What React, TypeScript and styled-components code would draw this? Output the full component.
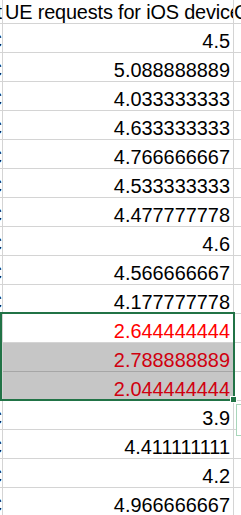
import styled, { createGlobalStyle } from "styled-components";

const GlobalStyle = createGlobalStyle`
  html, body {
    margin: 0;
    padding: 0;
    background: #fff;
    overflow: hidden;
  }
`;

const Sheet = styled.div`
  position: relative;
  width: 241px;
  height: 515px;
  overflow: hidden;
  font-family: "Liberation Sans", Arial, sans-serif;
  font-size: 19.9px;
  color: #000;
  background: #fff;
`;

const Row = styled.div<{ $header?: boolean }>`
  display: flex;
  height: ${(p) => (p.$header ? 24 : 29)}px;
`;

const Cell = styled.div<{ $fill?: boolean }>`
  box-sizing: border-box;
  display: flex;
  align-items: flex-end;
  height: 100%;
  line-height: 22px;
  white-space: nowrap;
  overflow: hidden;
  border-bottom: 1px solid ${(p) => (p.$fill ? "#a6a6a6" : "#d4d4d4")};
  background: ${(p) => (p.$fill ? "#c6c6c6" : "#fff")};
`;

const EdgeCell = styled(Cell)`
  width: 3px;
  flex: none;
  justify-content: flex-end;
  border-right: 1px solid #d4d4d4;
`;

const ValueCell = styled(Cell)<{ $tone?: "red" | "dim" }>`
  width: 231px;
  flex: none;
  justify-content: flex-end;
  padding-right: 3px;
  border-right: 1px solid ${(p) => (p.$fill ? "#a6a6a6" : "#d4d4d4")};
  color: ${(p) =>
    p.$tone === "red" ? "#ff0000" : p.$tone === "dim" ? "#d0000f" : "#000"};
`;

const HeadCell = styled(ValueCell)`
  justify-content: flex-start;
  padding: 0 0 0 2px;
  letter-spacing: -0.16px;
`;

const NextCell = styled(Cell)`
  flex: 1;
  padding-left: 0;
`;

const Selection = styled.div`
  position: absolute;
  left: 0;
  top: 312px;
  width: 235px;
  height: 89px;
  box-sizing: border-box;
  border: 2px solid #217346;
  pointer-events: none;
`;

const FillHandle = styled.div`
  position: absolute;
  left: 230px;
  top: 396px;
  width: 5px;
  height: 5px;
  background: #217346;
  border: 1px solid #fff;
`;

const QuickButton = styled.div`
  position: absolute;
  left: 236px;
  top: 404px;
  width: 24px;
  height: 32px;
  box-sizing: border-box;
  border: 1px solid #a9d6bb;
  background: #fff;
`;

type Item = { value: string; tone?: "red" | "dim"; fill?: boolean };

const rows: Item[] = [
  { value: "4.5" },
  { value: "5.088888889" },
  { value: "4.033333333" },
  { value: "4.633333333" },
  { value: "4.766666667" },
  { value: "4.533333333" },
  { value: "4.477777778" },
  { value: "4.6" },
  { value: "4.566666667" },
  { value: "4.177777778" },
  { value: "2.644444444", tone: "red" },
  { value: "2.788888889", tone: "dim", fill: true },
  { value: "2.044444444", tone: "dim", fill: true },
  { value: "3.9" },
  { value: "4.411111111" },
  { value: "4.2" },
  { value: "4.966666667" },
];

const App = () => {
  return (
    <>
      <GlobalStyle />
      <Sheet>
        <Row $header>
          <EdgeCell>
            <span>t</span>
          </EdgeCell>
          <HeadCell>UE requests for iOS device</HeadCell>
          <NextCell>Count</NextCell>
        </Row>
        {rows.map((r, i) => (
          <Row key={i}>
            <EdgeCell>
              <span>C</span>
            </EdgeCell>
            <ValueCell $fill={r.fill} $tone={r.tone}>
              {r.value}
            </ValueCell>
            <NextCell />
          </Row>
        ))}
        <Selection />
        <FillHandle />
        <QuickButton />
      </Sheet>
    </>
  );
};

export default App;
